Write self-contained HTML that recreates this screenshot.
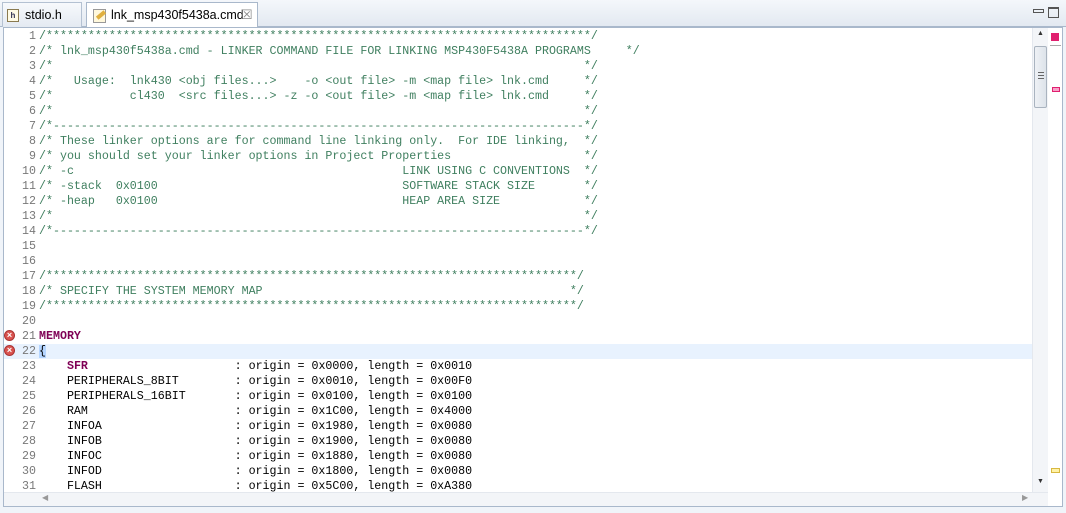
<!DOCTYPE html>
<html><head><meta charset="utf-8"><style>
*{margin:0;padding:0;box-sizing:border-box}
body{width:1066px;height:513px;overflow:hidden;background:#f0f4f9;font-family:"Liberation Sans",sans-serif;position:relative}
.tabbar{position:absolute;left:0;top:0;width:1066px;height:27px;background:linear-gradient(#f4f7fb,#e3e9f1);border-bottom:1px solid #a9b8cb}
.tab{position:absolute;top:2px;height:25px;font-size:12.5px;line-height:24px;color:#000}
.t1{left:2px;width:80px;background:linear-gradient(#f7f9fc,#e4eaf2);border:1px solid #b4c1d2;border-bottom:none}
.t2{left:86px;width:172px;background:#fff;border:1px solid #a9b8cb;border-bottom:none;height:26px}
.ed{position:absolute;left:3px;top:27px;width:1060px;height:480px;background:#fff;border:1px solid #a9b8cb}
.ln{position:absolute;left:0;width:36px;text-align:right;font:11.65px "Liberation Mono","DejaVu Sans Mono",monospace;color:#787878;height:15px;line-height:15px}
.tx{position:absolute;left:39px;white-space:pre;font:11.65px "Liberation Mono","DejaVu Sans Mono",monospace;color:#000;height:15px;line-height:15px}
.c{color:#3f7f5f}.k{color:#7f0055;font-weight:bold}
.vs{position:absolute;left:1032px;top:28px;width:16px;height:464px;background:#f3f5f8;border-left:1px solid #e4e8ee}
.thumb{position:absolute;left:1034px;top:46px;width:13px;height:62px;background:linear-gradient(90deg,#eef1f5,#dde3ea);border:1px solid #a9b3bf;border-radius:2px}
.hs{position:absolute;left:4px;top:492px;width:1044px;height:14px;background:#f3f5f8;border-top:1px solid #e4e8ee}
.err{position:absolute;left:4px;width:11px;height:11px;border-radius:50%;background:#d9534f;border:1px solid #a33;color:#fff;font-size:9px;line-height:9px;text-align:center;font-weight:bold}
</style></head><body>
<div class="tabbar"></div>
<div class="tab t1"><span style="position:absolute;left:4px;top:6px;width:12px;height:13px;border:1px solid #8a7a50;background:#fffbe6;font-size:8px;line-height:11px;text-align:center;font-weight:bold;color:#335">h</span><span style="position:absolute;left:22px">stdio.h</span></div>
<div class="tab t2"><span style="position:absolute;left:6px;top:6px;width:13px;height:14px;border:1px solid #999;background:#fff8dc"></span><span style="position:absolute;left:9px;top:10px;width:10px;height:4px;background:#e0b040;transform:rotate(-40deg)"></span><span style="position:absolute;left:24px">lnk_msp430f5438a.cmd</span><span style="position:absolute;left:154px;top:0;color:#888;font-size:13px">☒</span></div>
<div style="position:absolute;left:1033px;top:9px;width:11px;height:4px;border:1px solid #555"></div>
<div style="position:absolute;left:1048px;top:7px;width:11px;height:11px;border:1px solid #555;border-top-width:2px"></div>
<div class="ed"></div>
<div style="position:absolute;left:4px;top:344px;width:1028px;height:15px;background:#e8f2fe"></div>
<div class="err" style="top:330px">×</div><div class="err" style="top:345px">×</div>
<div id="code"></div>
<div class="vs"></div><div class="thumb"></div>
<div style="position:absolute;left:1037px;top:30px;font-size:7px;color:#333">▲</div>
<div style="position:absolute;left:1037px;top:478px;font-size:7px;color:#333">▼</div>
<div style="position:absolute;left:1038px;top:72px;width:6px;height:7px;border-top:1px solid #666;border-bottom:1px solid #666"><div style="margin-top:2px;border-top:1px solid #666"></div></div>
<div class="hs"></div>
<div style="position:absolute;left:42px;top:493px;font-size:8px;color:#999">◀</div>
<div style="position:absolute;left:1022px;top:493px;font-size:8px;color:#999">▶</div>
<div style="position:absolute;left:1051px;top:33px;width:8px;height:8px;background:#e0206f"></div>
<div style="position:absolute;left:1050px;top:45px;width:11px;height:1px;background:#aaa"></div>
<div style="position:absolute;left:1052px;top:87px;width:8px;height:5px;background:#f8a0c8;border:1px solid #e0206f"></div>
<div style="position:absolute;left:1051px;top:468px;width:9px;height:5px;background:#fff2a8;border:1px solid #d8b840"></div>
<script>
var L=[
['c','/******************************************************************************/'],
['c','/* lnk_msp430f5438a.cmd - LINKER COMMAND FILE FOR LINKING MSP430F5438A PROGRAMS     */'],
['c','/*                                                                            */'],
['c','/*   Usage:  lnk430 <obj files...>    -o <out file> -m <map file> lnk.cmd     */'],
['c','/*           cl430  <src files...> -z -o <out file> -m <map file> lnk.cmd     */'],
['c','/*                                                                            */'],
['c','/*----------------------------------------------------------------------------*/'],
['c','/* These linker options are for command line linking only.  For IDE linking,  */'],
['c','/* you should set your linker options in Project Properties                   */'],
['c','/* -c                                               LINK USING C CONVENTIONS  */'],
['c','/* -stack  0x0100                                   SOFTWARE STACK SIZE       */'],
['c','/* -heap   0x0100                                   HEAP AREA SIZE            */'],
['c','/*                                                                            */'],
['c','/*----------------------------------------------------------------------------*/'],
['',''],['',''],
['c','/****************************************************************************/'],
['c','/* SPECIFY THE SYSTEM MEMORY MAP                                            */'],
['c','/****************************************************************************/'],
['',''],
['k','MEMORY'],
['','<span style="background:#b5d5ff">{</span>'],
['','    <span class="k">SFR</span>                     : origin = 0x0000, length = 0x0010'],
['','    PERIPHERALS_8BIT        : origin = 0x0010, length = 0x00F0'],
['','    PERIPHERALS_16BIT       : origin = 0x0100, length = 0x0100'],
['','    RAM                     : origin = 0x1C00, length = 0x4000'],
['','    INFOA                   : origin = 0x1980, length = 0x0080'],
['','    INFOB                   : origin = 0x1900, length = 0x0080'],
['','    INFOC                   : origin = 0x1880, length = 0x0080'],
['','    INFOD                   : origin = 0x1800, length = 0x0080'],
['','    FLASH                   : origin = 0x5C00, length = 0xA380']];
var h='';
function esc(s){return s.replace(/&/g,'&amp;').replace(/</g,'&lt;').replace(/>/g,'&gt;');}
for(var i=0;i<L.length;i++){var t=29+i*15;
var s=L[i][1];var txt=(i==21||i==22)?s:esc(s);var hh=Math.min(15,492-t);
h+='<div class="ln" style="top:'+t+'px;height:'+hh+'px;overflow:hidden">'+(i+1)+'</div><div class="tx '+L[i][0]+'" style="top:'+t+'px;height:'+hh+'px;overflow:hidden">'+txt+'</div>';}
document.getElementById('code').innerHTML=h;
</script>
</body></html>
